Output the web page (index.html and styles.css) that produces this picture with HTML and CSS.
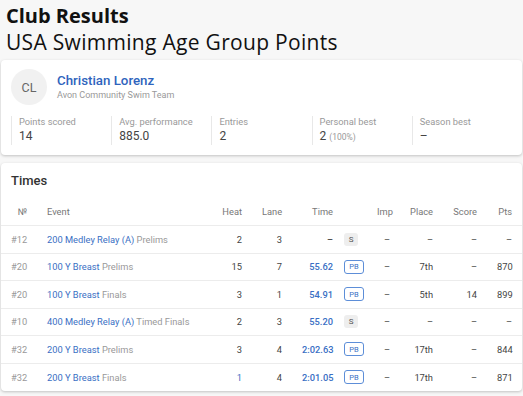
FILE: index.html
```html
<!DOCTYPE html>
<html lang="en">
<head>
  <meta charset="UTF-8">
  <meta name="viewport" content="width=device-width, initial-scale=1.0">
  <title>Club Results</title>
  <link rel="stylesheet" href="styles.css">
</head>
<body>
  <div class="page-header">
    <h1>Club Results</h1>
    <h2>USA Swimming Age Group Points</h2>
  </div>

  <div class="card swimmer-card">
    <div class="swimmer">
      <div class="avatar">CL</div>
      <div class="swimmer-info">
        <a class="swimmer-name" href="#">Christian Lorenz</a>
        <div class="swimmer-team">Avon Community Swim Team</div>
      </div>
    </div>

    <div class="stats">
      <div class="stat">
        <div class="stat-label">Points scored</div>
        <div class="stat-value">14</div>
      </div>
      <div class="stat">
        <div class="stat-label">Avg. performance</div>
        <div class="stat-value">885.0</div>
      </div>
      <div class="stat">
        <div class="stat-label">Entries</div>
        <div class="stat-value">2</div>
      </div>
      <div class="stat">
        <div class="stat-label">Personal best</div>
        <div class="stat-value">2 <span class="stat-note">(100%)</span></div>
      </div>
      <div class="stat">
        <div class="stat-label">Season best</div>
        <div class="stat-value">–</div>
      </div>
    </div>
  </div>

  <div class="card times-card">
    <div class="card-title">Times</div>
    <table class="times">
      <thead>
        <tr>
          <th class="col-no">№</th>
          <th class="col-event">Event</th>
          <th class="col-heat">Heat</th>
          <th class="col-lane">Lane</th>
          <th class="col-time">Time</th>
          <th class="col-badge"></th>
          <th class="col-imp">Imp</th>
          <th class="col-place">Place</th>
          <th class="col-score">Score</th>
          <th class="col-pts">Pts</th>
        </tr>
      </thead>
      <tbody>
        <tr>
          <td class="col-no">#12</td>
          <td class="col-event"><a href="#">200 Medley Relay (A)</a> <span class="round">Prelims</span></td>
          <td class="col-heat">2</td>
          <td class="col-lane">3</td>
          <td class="col-time">–</td>
          <td class="col-badge"><span class="badge badge-s">S</span></td>
          <td class="col-imp">–</td>
          <td class="col-place">–</td>
          <td class="col-score">–</td>
          <td class="col-pts">–</td>
        </tr>
        <tr>
          <td class="col-no">#20</td>
          <td class="col-event"><a href="#">100 Y Breast</a> <span class="round">Prelims</span></td>
          <td class="col-heat">15</td>
          <td class="col-lane">7</td>
          <td class="col-time"><a href="#">55.62</a></td>
          <td class="col-badge"><span class="badge badge-pb">PB</span></td>
          <td class="col-imp">–</td>
          <td class="col-place">7th</td>
          <td class="col-score">–</td>
          <td class="col-pts">870</td>
        </tr>
        <tr>
          <td class="col-no">#20</td>
          <td class="col-event"><a href="#">100 Y Breast</a> <span class="round">Finals</span></td>
          <td class="col-heat">3</td>
          <td class="col-lane">1</td>
          <td class="col-time"><a href="#">54.91</a></td>
          <td class="col-badge"><span class="badge badge-pb">PB</span></td>
          <td class="col-imp">–</td>
          <td class="col-place">5th</td>
          <td class="col-score">14</td>
          <td class="col-pts">899</td>
        </tr>
        <tr>
          <td class="col-no">#10</td>
          <td class="col-event"><a href="#">400 Medley Relay (A)</a> <span class="round">Timed Finals</span></td>
          <td class="col-heat">2</td>
          <td class="col-lane">3</td>
          <td class="col-time"><a href="#">55.20</a></td>
          <td class="col-badge"><span class="badge badge-s">S</span></td>
          <td class="col-imp">–</td>
          <td class="col-place">–</td>
          <td class="col-score">–</td>
          <td class="col-pts">–</td>
        </tr>
        <tr>
          <td class="col-no">#32</td>
          <td class="col-event"><a href="#">200 Y Breast</a> <span class="round">Prelims</span></td>
          <td class="col-heat">3</td>
          <td class="col-lane">4</td>
          <td class="col-time"><a href="#">2:02.63</a></td>
          <td class="col-badge"><span class="badge badge-pb">PB</span></td>
          <td class="col-imp">–</td>
          <td class="col-place">17th</td>
          <td class="col-score">–</td>
          <td class="col-pts">844</td>
        </tr>
        <tr>
          <td class="col-no">#32</td>
          <td class="col-event"><a href="#">200 Y Breast</a> <span class="round">Finals</span></td>
          <td class="col-heat"><a href="#">1</a></td>
          <td class="col-lane">4</td>
          <td class="col-time"><a href="#">2:01.05</a></td>
          <td class="col-badge"><span class="badge badge-pb">PB</span></td>
          <td class="col-imp">–</td>
          <td class="col-place">17th</td>
          <td class="col-score">–</td>
          <td class="col-pts">871</td>
        </tr>
      </tbody>
    </table>
  </div>
</body>
</html>
```

FILE: styles.css
```css
body {
  font-family: Roboto, "Liberation Sans", Arial, sans-serif;
  margin: 0;
  padding: 0 1px;
  background-color: #f7f7f7;
  color: #333;
}

a {
  color: #3a6fc4;
  text-decoration: none;
}

.page-header {
  padding: 3px 5px 5px;
  font-family: "Open Sans", "DejaVu Sans", sans-serif;
  color: #111;
}

.page-header h1 {
  margin: 0;
  font-size: 20px;
  line-height: 26px;
  font-weight: 700;
}

.page-header h2 {
  margin: 0;
  font-size: 21px;
  line-height: 26px;
  font-weight: 400;
  letter-spacing: 0.3px;
}

.card {
  background-color: white;
  border-radius: 4px;
  box-shadow: 0 1px 3px rgba(0, 0, 0, 0.22);
  margin-bottom: 8px;
}

/* swimmer card */
.swimmer-card {
  padding: 9px 10px 10px;
}

.swimmer {
  display: flex;
  align-items: center;
  gap: 10px;
}

.avatar {
  width: 36px;
  height: 36px;
  border-radius: 50%;
  background-color: #f1f1f1;
  color: #666;
  font-size: 12.5px;
  display: flex;
  align-items: center;
  justify-content: center;
}

.swimmer-name {
  display: block;
  font-size: 13.3px;
  font-weight: 500;
  line-height: 17px;
  color: #2f64bd;
}

.swimmer-team {
  font-size: 9px;
  line-height: 13px;
  color: #999;
}

.stats {
  display: grid;
  grid-template-columns: repeat(5, 1fr);
  margin-top: 11px;
}

.stat {
  border-left: 1px solid #e8e8e8;
  padding-left: 7px;
  height: 29px;
}

.stat-label {
  font-size: 9.3px;
  line-height: 12px;
  color: #999;
}

.stat-value {
  font-size: 12px;
  line-height: 16px;
  color: #444;
}

.stat-note {
  font-size: 8.5px;
  color: #999;
}

/* times card */
.card-title {
  height: 35px;
  padding-left: 10px;
  display: flex;
  align-items: center;
  font-size: 13px;
  font-weight: 500;
  color: #333;
}

.times {
  width: 100%;
  border-collapse: collapse;
  table-layout: fixed;
  font-size: 9.3px;
}

.times th,
.times td {
  box-sizing: border-box;
  height: 27.5px;
  padding: 0 10px;
  text-align: right;
  white-space: nowrap;
}

.times th {
  font-weight: 400;
  color: #777;
}

.times td {
  border-top: 1px solid #ececec;
  color: #444;
}

.times .col-no { width: 36px; color: #999; }
.times .col-event { text-align: left; }
.times .col-heat { width: 40px; }
.times .col-lane { width: 40px; }
.times .col-time { width: 51px; font-weight: 500; }
.times .col-badge { width: 24px; padding: 0 0 0 1px; text-align: left; }
.times .col-imp { width: 33px; }
.times .col-place { width: 43px; }
.times .col-score { width: 44px; }
.times .col-pts { width: 35px; }

.times th.col-no { text-align: right; color: #777; }
.times th.col-time { font-weight: 400; }

.round {
  color: #999;
}

.badge {
  display: inline-flex;
  align-items: center;
  justify-content: center;
  box-sizing: border-box;
  height: 13px;
  border-radius: 3px;
  font-size: 7px;
  vertical-align: middle;
}

.badge-s {
  width: 14px;
  background-color: #eee;
  color: #555;
  font-size: 8px;
}

.badge-pb {
  width: 20px;
  height: 14px;
  border: 1px solid #5d8ed8;
  color: #3a6fc4;
  font-size: 7.5px;
}
```
